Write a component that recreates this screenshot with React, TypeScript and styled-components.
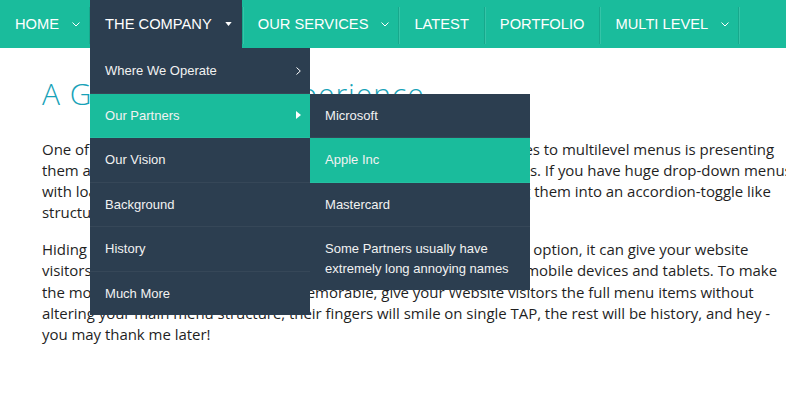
import React from "react";
import styled, { createGlobalStyle, css } from "styled-components";

const GlobalStyle = createGlobalStyle`
  html, body { margin: 0; padding: 0; background: #ffffff; }
  body { overflow: hidden; font-family: "Open Sans", "Noto Sans", sans-serif; }
  * { box-sizing: border-box; }
`;

const Header = styled.header`
  background: #1abc9c;
  height: 48px;
  position: relative;
  z-index: 10;
`;

const NavList = styled.ul`
  display: flex;
  margin: 0;
  padding: 0;
  list-style: none;
  height: 48px;
`;

const NavItem = styled.li`
  position: relative;
  display: flex;
  &::after {
    content: "";
    width: 1px;
    margin: 7px 0 4px;
    background: rgba(0, 0, 0, 0.1);
    box-shadow: 1px 0 0 rgba(255, 255, 255, 0.12);
  }
`;

const NavLink = styled.a<{ $active?: boolean; $hasMenu?: boolean }>`
  display: flex;
  align-items: center;
  height: 48px;
  padding: 0 ${(p) => (p.$hasMenu ? "9px" : "15px")} 0 15px;
  font-family: "Liberation Sans", Arial, sans-serif;
  font-size: 14.7px;
  color: #ffffff;
  text-transform: uppercase;
  text-decoration: none;
  white-space: nowrap;
  background: ${(p) => (p.$active ? "#2c3e50" : "transparent")};
`;

const Caret = styled.svg`
  margin-left: 13px;
  width: 8px;
  height: 5px;
  flex: none;
`;

const Dropdown = styled.ul<{ $left: number; $top: number; $pad?: number }>`
  position: absolute;
  left: ${(p) => p.$left}px;
  top: ${(p) => p.$top}px;
  width: 220px;
  margin: 0;
  padding: ${(p) => p.$pad ?? 0}px 0 0;
  list-style: none;
  background: #2c3e50;
`;

const DropItem = styled.li<{ $active?: boolean }>`
  position: relative;
  border-bottom: 1px solid rgba(255, 255, 255, 0.05);
  &:last-child {
    border-bottom: none;
  }
  ${(p) =>
    p.$active &&
    css`
      background: #1abc9c;
    `}
`;

const DropLink = styled.a`
  display: flex;
  align-items: center;
  justify-content: space-between;
  padding: 12px 9px 12px 15px;
  font-family: "Liberation Sans", Arial, sans-serif;
  font-size: 13px;
  line-height: 19.5px;
  color: #f2f2f2;
  text-decoration: none;
  white-space: pre;
`;

const Arrow = styled.svg`
  width: 5px;
  height: 8px;
  flex: none;
`;

const Content = styled.main`
  padding: 0 0 0 42px;
  color: #1f1f1f;
`;

const Title = styled.h1`
  margin: 26px 0 25px;
  font-family: "Open Sans", sans-serif;
  font-weight: 300;
  font-size: 30px;
  letter-spacing: 1px;
  line-height: 40px;
  color: #17a2b8;
  white-space: nowrap;
`;

const Para = styled.p`
  margin: 0 0 16px;
  font-family: "Open Sans", sans-serif;
  font-size: 15px;
  line-height: 21.1px;
  letter-spacing: -0.04px;
  white-space: nowrap;
`;

const ChevronDown = () => (
  <Caret viewBox="0 0 8 5">
    <polyline points="0.5,0.5 4,4 7.5,0.5" fill="none" stroke="#ffffff" strokeWidth="1" />
  </Caret>
);

const CaretFilled = () => (
  <Caret viewBox="0 0 8 5" style={{ width: 7, height: 4, marginRight: 1 }}>
    <polygon points="0,0 8,0 4,5" fill="#ffffff" />
  </Caret>
);

const ChevronRight = () => (
  <Arrow viewBox="0 0 5 8">
    <polyline points="0.5,0.5 4.3,4 0.5,7.5" fill="none" stroke="#ffffff" strokeWidth="1" />
  </Arrow>
);

const ArrowFilled = () => (
  <Arrow viewBox="0 0 5 8">
    <polygon points="0,0 5,4 0,8" fill="#ffffff" />
  </Arrow>
);

const menu = [
  { label: "Home", sub: true },
  { label: "The Company", sub: true, active: true },
  { label: "Our Services", sub: true },
  { label: "Latest" },
  { label: "Portfolio" },
  { label: "Multi Level", sub: true },
];

const companyItems = [
  { label: "Where We Operate", arrow: "open" },
  { label: "Our Partners", arrow: "filled", active: true },
  { label: "Our Vision" },
  { label: "Background" },
  { label: "History" },
  { label: "Much More" },
];

const partners = [
  { label: "Microsoft" },
  { label: "Apple Inc", active: true },
  { label: "Mastercard" },
  { label: "Some Partners usually have\nextremely long annoying names" },
];

export default function App() {
  return (
    <>
      <GlobalStyle />
      <Header>
        <NavList>
          {menu.map((m) => (
            <NavItem key={m.label}>
              <NavLink href="#" $active={m.active} $hasMenu={m.sub}>
                {m.label}
                {m.sub && (m.active ? <CaretFilled /> : <ChevronDown />)}
              </NavLink>
              {m.active && (
                <Dropdown $left={0} $top={48} $pad={1}>
                  {companyItems.map((c) => (
                    <DropItem key={c.label} $active={c.active}>
                      <DropLink href="#">
                        {c.label}
                        {c.arrow === "open" && <ChevronRight />}
                        {c.arrow === "filled" && <ArrowFilled />}
                      </DropLink>
                      {c.active && (
                        <Dropdown $left={220} $top={0}>
                          {partners.map((p) => (
                            <DropItem key={p.label} $active={p.active}>
                              <DropLink href="#">{p.label}</DropLink>
                            </DropItem>
                          ))}
                        </Dropdown>
                      )}
                    </DropItem>
                  ))}
                </Dropdown>
              )}
            </NavItem>
          ))}
        </NavList>
      </Header>
      <Content>
        <Title>A Great Mobile Experience</Title>
        <Para>
          One of the most popular and most user-friendly responsive approaches to multilevel menus is presenting
          <br />
          them as off-canvas panels or drop-downs on phones and tablet devices. If you have huge drop-down menus
          <br />
          with loads of nested levels and sub-items, you should consider turning them into an accordion-toggle like
          <br />
          structure.
        </Para>
        <Para>
          Hiding submenus behind toggle icons on mobile is not always the best option, it can give your website
          <br />
          visitors a hard time finding what they are after, especially when using mobile devices and tablets. To make
          <br />
          the most of your menus usable and memorable, give your Website visitors the full menu items without
          <br />
          altering your main menu structure, their fingers will smile on single TAP, the rest will be history, and hey -
          <br />
          you may thank me later!
        </Para>
      </Content>
    </>
  );
}
